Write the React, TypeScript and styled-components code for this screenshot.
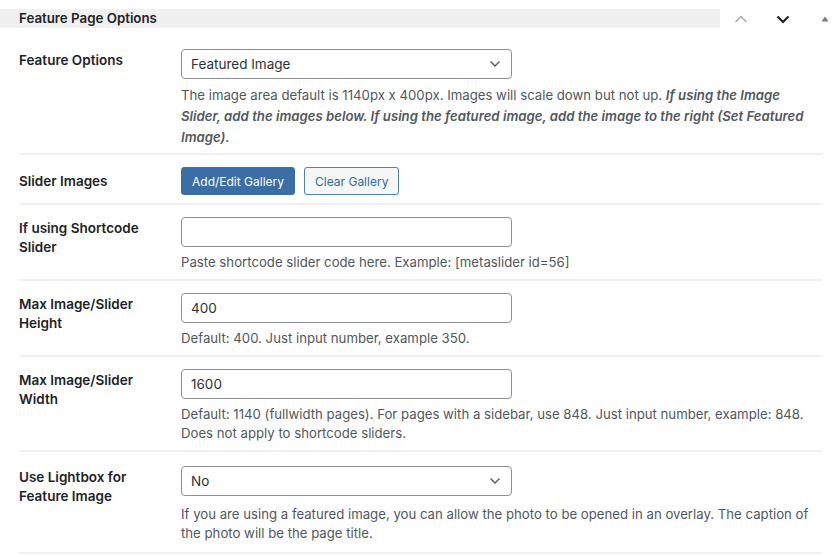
import React from 'react';
import styled, { createGlobalStyle } from 'styled-components';

const GlobalStyle = createGlobalStyle`
  body {
    margin: 0;
    background: #fff;
    font-family: Inter, "Liberation Sans", sans-serif;
    color: #1d2327;
    overflow: hidden;
  }
`;

const Box = styled.div`
  width: 840px;
  padding-top: 9px;
`;

const Header = styled.div`
  display: flex;
  align-items: center;
  height: 19px;
`;

const Title = styled.h2`
  flex: 0 0 720px;
  height: 19px;
  margin: 0;
  padding-left: 19px;
  box-sizing: border-box;
  background: #f0f0f1;
  font-size: 13.3px;
  font-weight: 600;
  line-height: 19px;
  color: #1d2327;
`;

const Actions = styled.div`
  display: flex;
  align-items: center;
  flex: 0 0 auto;
`;

const HandleButton = styled.button<{ $tone: string }>`
  display: flex;
  align-items: center;
  justify-content: center;
  width: 42px;
  height: 19px;
  padding: 0;
  border: 0;
  background: none;
  color: ${(p) => p.$tone};
`;

const Table = styled.div`
  padding: 21px 18px 0 19px;
`;

const Row = styled.div<{ $top?: number; $bottom?: number }>`
  display: grid;
  grid-template-columns: 162px 1fr;
  padding: ${(p) => p.$top ?? 12}px 0 ${(p) => p.$bottom ?? 7}px;
  border-bottom: 2px solid #f0f0f1;
  &:first-child {
    padding-top: 0;
  }
`;

const Label = styled.div<{ $offset?: number }>`
  font-size: 13.5px;
  font-weight: 600;
  line-height: 19px;
  padding-top: ${(p) => p.$offset ?? 2}px;
  padding-right: 16px;
  color: #1d2327;
`;

const Field = styled.div`
  display: flex;
  flex-direction: column;
  align-items: flex-start;
`;

const SelectBox = styled.div`
  display: flex;
  align-items: center;
  justify-content: space-between;
  width: 331px;
  height: 30px;
  box-sizing: border-box;
  padding: 0 10px 0 9px;
  border: 1px solid #8c8f94;
  border-radius: 4px;
  font-size: 13.5px;
  color: #2c3338;
`;

const TextInput = styled.div`
  display: flex;
  align-items: center;
  width: 331px;
  height: 30px;
  box-sizing: border-box;
  padding: 0 9px;
  border: 1px solid #8c8f94;
  border-radius: 4px;
  font-size: 13.5px;
  color: #2c3338;
`;

const Description = styled.p<{ $lh?: number; $gap?: number }>`
  margin: ${(p) => p.$gap ?? 6}px 0 0;
  font-size: 13.2px;
  line-height: ${(p) => p.$lh ?? 19}px;
  color: #50575e;
  em {
    font-weight: 600;
  }
`;

const Buttons = styled.div`
  display: flex;
  gap: 9px;
`;

const Button = styled.button<{ $primary?: boolean }>`
  height: 28px;
  padding: 0 10px;
  border-radius: 3px;
  font-family: inherit;
  font-size: 12px;
  border: 1px solid ${(p) => (p.$primary ? '#3b6ea5' : '#4f80b8')};
  background: ${(p) => (p.$primary ? '#3b6ea5' : '#f6f7f7')};
  color: ${(p) => (p.$primary ? '#fff' : '#2f6aa6')};
`;

const Chevron = () => (
  <svg width="12" height="8" viewBox="0 0 12 8">
    <path d="M1.5 1.5 L6 6 L10.5 1.5" fill="none" stroke="#50575e" strokeWidth="1.4" />
  </svg>
);

const Select = ({ value }: { value: string }) => (
  <SelectBox>
    <span>{value}</span>
    <Chevron />
  </SelectBox>
);

const App = () => (
  <Box>
    <GlobalStyle />
    <Header>
      <Title>Feature Page Options</Title>
      <Actions>
        <HandleButton $tone="#a7aaad">
          <svg width="14" height="10" viewBox="0 0 14 10">
            <path d="M1.5 8 L7 2.5 L12.5 8" fill="none" stroke="currentColor" strokeWidth="1.5" />
          </svg>
        </HandleButton>
        <HandleButton $tone="#1d2327">
          <svg width="14" height="10" viewBox="0 0 14 10">
            <path d="M1.5 2.5 L7 8 L12.5 2.5" fill="none" stroke="currentColor" strokeWidth="2.2" />
          </svg>
        </HandleButton>
        <HandleButton $tone="#787c82">
          <svg width="8" height="6" viewBox="0 0 8 6">
            <path d="M4 0.5 L7.5 5.5 L0.5 5.5 Z" fill="currentColor" />
          </svg>
        </HandleButton>
      </Actions>
    </Header>
    <Table>
      <Row $bottom={5}>
        <Label>Feature Options</Label>
        <Field>
          <Select value="Featured Image" />
          <Description $lh={21}>
            The image area default is 1140px x 400px. Images will scale down but not up.{' '}
            <em>
              If using the Image Slider, add the images below. If using the featured image, add
              the image to the right (Set Featured Image).
            </em>
          </Description>
        </Field>
      </Row>
      <Row $bottom={8}>
        <Label $offset={5}>Slider Images</Label>
        <Field>
          <Buttons>
            <Button $primary>Add/Edit Gallery</Button>
            <Button>Clear Gallery</Button>
          </Buttons>
        </Field>
      </Row>
      <Row>
        <Label>If using Shortcode Slider</Label>
        <Field>
          <TextInput />
          <Description>Paste shortcode slider code here. Example: [metaslider id=56]</Description>
        </Field>
      </Row>
      <Row>
        <Label>Max Image/Slider Height</Label>
        <Field>
          <TextInput>400</TextInput>
          <Description>Default: 400. Just input number, example 350.</Description>
        </Field>
      </Row>
      <Row>
        <Label>Max Image/Slider Width</Label>
        <Field>
          <TextInput>1600</TextInput>
          <Description>
            Default: 1140 (fullwidth pages). For pages with a sidebar, use 848. Just input number,
            example: 848. Does not apply to shortcode sliders.
          </Description>
        </Field>
      </Row>
      <Row $top={14} $bottom={9}>
        <Label>Use Lightbox for Feature Image</Label>
        <Field>
          <Select value="No" />
          <Description $gap={9}>
            If you are using a featured image, you can allow the photo to be opened in an overlay.
            The caption of the photo will be the page title.
          </Description>
        </Field>
      </Row>
    </Table>
  </Box>
);

export default App;
